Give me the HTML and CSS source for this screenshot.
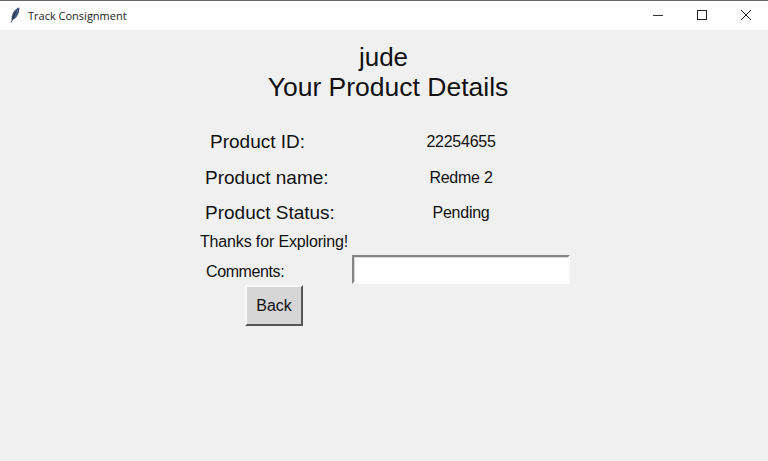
FILE: index.html
```html
<html>
<head>
  <link rel="stylesheet" href="styles.css">
</head>
<body>
<div class="titlebar">
  <svg class="feather" width="11" height="16" viewBox="0 0 11 16">
    <path d="M1.6 12.5 C1.4 8 3.6 2.8 8.6 0.6 C9.6 0.4 9.6 1.4 9.4 2.6 C9 6.5 7 11 3.6 12.6 Z" fill="#40587a"/>
    <path d="M1.2 15.5 L5.6 5" stroke="#1c2a3c" stroke-width="0.9" fill="none"/>
  </svg>
  <span class="window-title">Track Consignment</span>
  <div class="window-buttons">
    <svg class="window-button" width="44" height="29" viewBox="0 0 44 29"><path d="M17 14.5 H27" stroke="#333" stroke-width="1"/></svg>
    <svg class="window-button" width="44" height="29" viewBox="0 0 44 29"><rect x="17.5" y="9.5" width="9" height="9" fill="none" stroke="#222" stroke-width="1"/></svg>
    <svg class="window-button" width="44" height="29" viewBox="0 0 44 29"><path d="M17 9 L27 19 M27 9 L17 19" stroke="#222" stroke-width="1" fill="none"/></svg>
  </div>
</div>
<div class="content">
  <h1 class="heading heading-user">jude</h1>
  <h1 class="heading heading-main">Your Product Details</h1>
  <div class="details">
    <div class="row row-id">
      <span class="label">Product ID:</span>
      <span class="value">22254655</span>
    </div>
    <div class="row row-name">
      <span class="label">Product name:</span>
      <span class="value">Redme 2</span>
    </div>
    <div class="row row-status">
      <span class="label">Product Status:</span>
      <span class="value">Pending</span>
    </div>
  </div>
  <p class="thanks">Thanks for Exploring!</p>
  <div class="comments">
    <label class="comments-label">Comments:</label>
    <input class="comments-input" type="text">
  </div>
  <button class="back-button">Back</button>
</div>
</body>
</html>
```

FILE: styles.css
```css
body {
  margin: 0;
  padding: 0;
  background-color: #f0f0f0;
  font-family: "Liberation Sans", Arial, sans-serif;
  color: #111;
  overflow: hidden;
}

.titlebar {
  display: flex;
  align-items: center;
  height: 29px;
  background-color: #fff;
  border-top: 1px solid #666;
}

.feather {
  margin-left: 10px;
  margin-bottom: 1px;
}

.window-title {
  margin-left: 7px;
  margin-bottom: 1px;
  font-family: "Open Sans", sans-serif;
  font-size: 11px;
  color: #222;
}

.window-buttons {
  display: flex;
  margin-left: auto;
}

.heading {
  margin: 0;
  font-weight: normal;
  line-height: 30px;
  text-align: center;
}

.heading-user {
  padding-top: 12px;
  margin-right: 1px;
  font-size: 26px;
}

.heading-main {
  margin-left: 8px;
  font-size: 26.5px;
}

.details {
  margin-top: 22.5px;
}

.row {
  display: grid;
  grid-template-columns: 352px 218px;
  align-items: center;
  height: 35.5px;
}

.label {
  font-size: 19px;
}

.value {
  font-size: 16px;
  letter-spacing: -0.25px;
  text-align: center;
}

.row-id .label {
  padding-left: 210px;
}

.row-name .label,
.row-status .label {
  padding-left: 205px;
}

.thanks {
  margin: 1px 0 0 200px;
  font-size: 16px;
  letter-spacing: -0.15px;
  line-height: 20px;
}

.comments {
  display: flex;
  align-items: center;
  height: 29px;
  margin-top: 3px;
}

.comments-label {
  width: 146px;
  margin-left: 206px;
  padding-top: 4px;
  font-size: 16px;
  letter-spacing: -0.4px;
}

.comments-input {
  box-sizing: border-box;
  width: 218px;
  height: 29px;
  margin: 0;
  padding: 0;
  background-color: #fff;
  border-style: solid;
  border-width: 2px;
  border-color: #858585 #fbfbfb #fbfbfb #858585;
  box-shadow: inset 1px 1px 0 #d8d8d8;
}

.back-button {
  display: block;
  box-sizing: border-box;
  width: 58px;
  height: 41px;
  margin: 1px 0 0 245px;
  padding: 0;
  background-color: #d6d6d6;
  border-style: solid;
  border-width: 2px;
  border-color: #fafafa #555 #555 #fafafa;
  font-family: "Liberation Sans", Arial, sans-serif;
  font-size: 16px;
  color: #111;
}
```
